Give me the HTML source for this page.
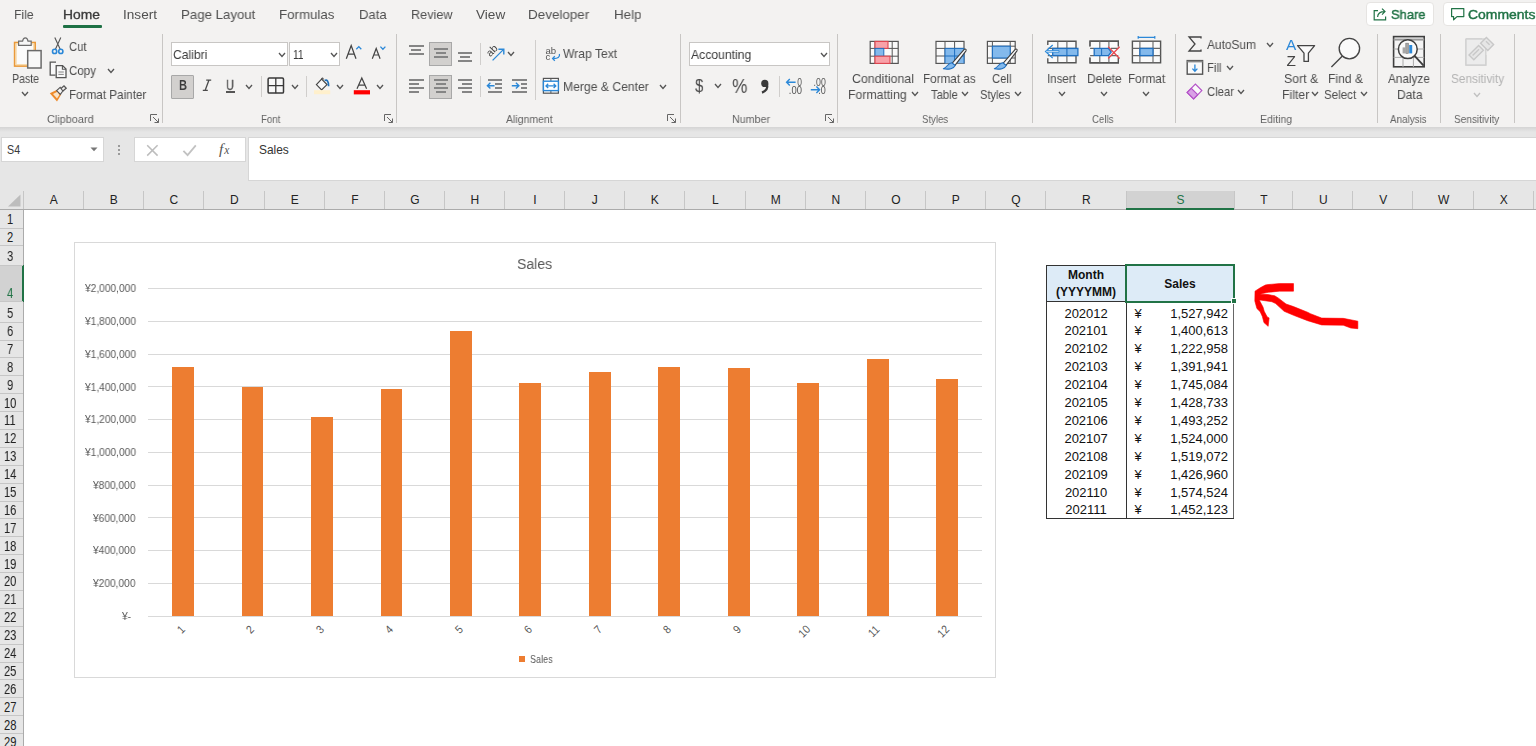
<!DOCTYPE html>
<html><head><meta charset="utf-8"><style>
html,body{margin:0;padding:0;}
body{width:1536px;height:746px;overflow:hidden;position:relative;background:#fff;font-family:"Liberation Sans",sans-serif;}
.t{position:absolute;white-space:nowrap;line-height:1;transform-origin:0 0;}
svg{overflow:visible}
</style></head><body>
<div style="position:absolute;left:0px;top:0px;width:1536px;height:127px;background:#f3f2f1"></div>
<div style="position:absolute;left:0px;top:127px;width:1536px;height:5px;background:linear-gradient(#d4d4d4,#e6e6e6)"></div>
<div style="position:absolute;left:0px;top:132px;width:1536px;height:59px;background:#e6e6e6"></div>
<div class="t" style="left:13.50px;top:8.29px;font-size:13.6px;color:#505050;transform:scaleX(0.8989);will-change:transform;">File</div>
<div class="t" style="left:63.30px;top:8.29px;font-size:13.6px;color:#3b3b3b;transform:scaleX(1.0171);will-change:transform;-webkit-text-stroke:0.35px #3b3b3b;">Home</div>
<div class="t" style="left:123.30px;top:8.29px;font-size:13.6px;color:#505050;transform:scaleX(0.9908);will-change:transform;">Insert</div>
<div class="t" style="left:181.00px;top:8.29px;font-size:13.6px;color:#505050;transform:scaleX(0.9741);will-change:transform;">Page Layout</div>
<div class="t" style="left:279.40px;top:8.29px;font-size:13.6px;color:#505050;transform:scaleX(0.9792);will-change:transform;">Formulas</div>
<div class="t" style="left:358.50px;top:8.29px;font-size:13.6px;color:#505050;transform:scaleX(0.9607);will-change:transform;">Data</div>
<div class="t" style="left:410.60px;top:8.29px;font-size:13.6px;color:#505050;transform:scaleX(0.9306);will-change:transform;">Review</div>
<div class="t" style="left:476.20px;top:8.29px;font-size:13.6px;color:#505050;transform:scaleX(0.9852);will-change:transform;">View</div>
<div class="t" style="left:528.30px;top:8.29px;font-size:13.6px;color:#505050;transform:scaleX(0.9888);will-change:transform;">Developer</div>
<div class="t" style="left:613.50px;top:8.29px;font-size:13.6px;color:#505050;transform:scaleX(0.9796);will-change:transform;">Help</div>
<div style="position:absolute;left:63px;top:25px;width:39px;height:3px;background:#1e7145;border-radius:1px"></div>
<div style="position:absolute;left:1366px;top:2px;width:68px;height:24px;background:#fff;border:1px solid #e6e4e2;border-radius:4px;box-sizing:border-box"></div>
<div style="position:absolute;left:1443px;top:2px;width:100px;height:24px;background:#fff;border:1px solid #e6e4e2;border-radius:4px;box-sizing:border-box"></div>
<div class="t" style="left:1391.00px;top:7.79px;font-size:13.6px;color:#217346;transform:scaleX(0.9478);will-change:transform;-webkit-text-stroke:0.45px #217346;">Share</div>
<div class="t" style="left:1468.00px;top:7.79px;font-size:13.6px;color:#217346;transform:scaleX(1.0266);will-change:transform;-webkit-text-stroke:0.45px #217346;">Comments</div>
<div style="position:absolute;left:162px;top:34px;width:1px;height:89px;background:#c8c6c4"></div>
<div style="position:absolute;left:396px;top:34px;width:1px;height:89px;background:#c8c6c4"></div>
<div style="position:absolute;left:680px;top:34px;width:1px;height:89px;background:#c8c6c4"></div>
<div style="position:absolute;left:837px;top:34px;width:1px;height:89px;background:#c8c6c4"></div>
<div style="position:absolute;left:1032px;top:34px;width:1px;height:89px;background:#c8c6c4"></div>
<div style="position:absolute;left:1175px;top:34px;width:1px;height:89px;background:#c8c6c4"></div>
<div style="position:absolute;left:1377px;top:34px;width:1px;height:89px;background:#c8c6c4"></div>
<div style="position:absolute;left:1440px;top:34px;width:1px;height:89px;background:#c8c6c4"></div>
<div style="position:absolute;left:1514px;top:34px;width:1px;height:89px;background:#c8c6c4"></div>
<div class="t" style="left:46.60px;top:114.02px;font-size:11.2px;color:#646464;transform:scaleX(0.9720);will-change:transform;">Clipboard</div>
<div class="t" style="left:260.80px;top:114.02px;font-size:11.2px;color:#646464;transform:scaleX(0.8701);will-change:transform;">Font</div>
<div class="t" style="left:506.00px;top:114.02px;font-size:11.2px;color:#646464;transform:scaleX(0.9356);will-change:transform;">Alignment</div>
<div class="t" style="left:731.60px;top:114.02px;font-size:11.2px;color:#646464;transform:scaleX(0.9589);will-change:transform;">Number</div>
<div class="t" style="left:921.80px;top:114.02px;font-size:11.2px;color:#646464;transform:scaleX(0.8590);will-change:transform;">Styles</div>
<div class="t" style="left:1092.30px;top:114.02px;font-size:11.2px;color:#646464;transform:scaleX(0.8636);will-change:transform;">Cells</div>
<div class="t" style="left:1259.80px;top:114.02px;font-size:11.2px;color:#646464;transform:scaleX(0.9402);will-change:transform;">Editing</div>
<div class="t" style="left:1390.00px;top:114.02px;font-size:11.2px;color:#646464;transform:scaleX(0.8776);will-change:transform;">Analysis</div>
<div class="t" style="left:1454.00px;top:114.02px;font-size:11.2px;color:#646464;transform:scaleX(0.8985);will-change:transform;">Sensitivity</div>
<div class="t" style="left:11.80px;top:73.06px;font-size:12.8px;color:#4d4d4d;transform:scaleX(0.8279);will-change:transform;">Paste</div>
<div class="t" style="left:69.40px;top:40.56px;font-size:12.8px;color:#4d4d4d;transform:scaleX(0.8836);will-change:transform;">Cut</div>
<div class="t" style="left:69.40px;top:64.96px;font-size:12.8px;color:#4d4d4d;transform:scaleX(0.9036);will-change:transform;">Copy</div>
<div class="t" style="left:69.40px;top:88.76px;font-size:12.8px;color:#4d4d4d;transform:scaleX(0.9143);will-change:transform;">Format Painter</div>
<div class="t" style="left:562.60px;top:48.26px;font-size:12.8px;color:#4d4d4d;transform:scaleX(0.9484);will-change:transform;">Wrap Text</div>
<div class="t" style="left:562.60px;top:80.66px;font-size:12.8px;color:#4d4d4d;transform:scaleX(0.9496);will-change:transform;">Merge &amp; Center</div>
<div class="t" style="left:852.40px;top:72.86px;font-size:12.8px;color:#4d4d4d;transform:scaleX(0.9681);will-change:transform;">Conditional</div>
<div class="t" style="left:848.30px;top:88.86px;font-size:12.8px;color:#4d4d4d;transform:scaleX(0.9595);will-change:transform;">Formatting</div>
<div class="t" style="left:923.00px;top:72.86px;font-size:12.8px;color:#4d4d4d;transform:scaleX(0.9147);will-change:transform;">Format as</div>
<div class="t" style="left:930.50px;top:88.86px;font-size:12.8px;color:#4d4d4d;transform:scaleX(0.8758);will-change:transform;">Table</div>
<div class="t" style="left:991.50px;top:72.86px;font-size:12.8px;color:#4d4d4d;transform:scaleX(0.8843);will-change:transform;">Cell</div>
<div class="t" style="left:980.00px;top:88.86px;font-size:12.8px;color:#4d4d4d;transform:scaleX(0.8693);will-change:transform;">Styles</div>
<div class="t" style="left:1047.40px;top:72.86px;font-size:12.8px;color:#4d4d4d;transform:scaleX(0.8996);will-change:transform;">Insert</div>
<div class="t" style="left:1087.00px;top:72.86px;font-size:12.8px;color:#4d4d4d;transform:scaleX(0.9405);will-change:transform;">Delete</div>
<div class="t" style="left:1127.60px;top:72.86px;font-size:12.8px;color:#4d4d4d;transform:scaleX(0.9152);will-change:transform;">Format</div>
<div class="t" style="left:1207.00px;top:39.06px;font-size:12.8px;color:#4d4d4d;transform:scaleX(0.9306);will-change:transform;">AutoSum</div>
<div class="t" style="left:1207.00px;top:62.26px;font-size:12.8px;color:#4d4d4d;transform:scaleX(0.8868);will-change:transform;">Fill</div>
<div class="t" style="left:1207.00px;top:86.16px;font-size:12.8px;color:#4d4d4d;transform:scaleX(0.8827);will-change:transform;">Clear</div>
<div class="t" style="left:1283.80px;top:72.86px;font-size:12.8px;color:#4d4d4d;transform:scaleX(0.9615);will-change:transform;">Sort &amp;</div>
<div class="t" style="left:1281.70px;top:88.86px;font-size:12.8px;color:#4d4d4d;transform:scaleX(0.9597);will-change:transform;">Filter</div>
<div class="t" style="left:1328.00px;top:72.86px;font-size:12.8px;color:#4d4d4d;transform:scaleX(0.9461);will-change:transform;">Find &amp;</div>
<div class="t" style="left:1323.80px;top:88.86px;font-size:12.8px;color:#4d4d4d;transform:scaleX(0.9051);will-change:transform;">Select</div>
<div class="t" style="left:1388.30px;top:73.26px;font-size:12.8px;color:#4d4d4d;transform:scaleX(0.9179);will-change:transform;">Analyze</div>
<div class="t" style="left:1396.50px;top:88.86px;font-size:12.8px;color:#4d4d4d;transform:scaleX(0.9431);will-change:transform;">Data</div>
<div class="t" style="left:1451.00px;top:73.26px;font-size:12.8px;color:#b3b3b3;transform:scaleX(0.9216);will-change:transform;">Sensitivity</div>
<div style="position:absolute;left:171px;top:42px;width:117px;height:24px;background:#fff;border:1px solid #c8c6c4;box-sizing:border-box"></div>
<div style="position:absolute;left:289px;top:42px;width:51px;height:24px;background:#fff;border:1px solid #c8c6c4;box-sizing:border-box"></div>
<div style="position:absolute;left:689px;top:42px;width:141px;height:24px;background:#fff;border:1px solid #c8c6c4;box-sizing:border-box"></div>
<div class="t" style="left:173.30px;top:47.63px;font-size:13.2px;color:#3a3a3a;transform:scaleX(0.9195);will-change:transform;">Calibri</div>
<div class="t" style="left:293.00px;top:47.63px;font-size:13.2px;color:#3a3a3a;transform:scaleX(0.7735);will-change:transform;">11</div>
<div class="t" style="left:691.40px;top:47.63px;font-size:13.2px;color:#3a3a3a;transform:scaleX(0.9233);will-change:transform;">Accounting</div>
<div style="position:absolute;left:1px;top:137px;width:103px;height:25px;background:#fff;border:1px solid #d6d6d6;box-sizing:border-box"></div>
<div class="t" style="left:6.70px;top:144.16px;font-size:12.8px;color:#3a3a3a;transform:scaleX(0.8367);">S4</div>
<div style="position:absolute;left:134px;top:137px;width:112px;height:25px;background:#fff;border:1px solid #d6d6d6;box-sizing:border-box"></div>
<div style="position:absolute;left:248px;top:137px;width:1300px;height:44px;background:#fff;border:1px solid #d6d6d6;box-sizing:border-box"></div>
<div class="t" style="left:259.40px;top:144.19px;font-size:12.3px;color:#333;transform:scaleX(0.9685);">Sales</div>
<div style="position:absolute;left:0px;top:191px;width:1536px;height:19px;background:#e6e6e6"></div>
<div style="position:absolute;left:0px;top:209px;width:1536px;height:1px;background:#ababab"></div>
<div style="position:absolute;left:1126px;top:191px;width:108px;height:18px;background:#d2d2d2"></div>
<div style="position:absolute;left:23px;top:191px;width:1px;height:18px;background:#c6c6c6"></div>
<div style="position:absolute;left:83px;top:191px;width:1px;height:18px;background:#c6c6c6"></div>
<div style="position:absolute;left:143px;top:191px;width:1px;height:18px;background:#c6c6c6"></div>
<div style="position:absolute;left:203px;top:191px;width:1px;height:18px;background:#c6c6c6"></div>
<div style="position:absolute;left:264px;top:191px;width:1px;height:18px;background:#c6c6c6"></div>
<div style="position:absolute;left:324px;top:191px;width:1px;height:18px;background:#c6c6c6"></div>
<div style="position:absolute;left:384px;top:191px;width:1px;height:18px;background:#c6c6c6"></div>
<div style="position:absolute;left:444px;top:191px;width:1px;height:18px;background:#c6c6c6"></div>
<div style="position:absolute;left:504px;top:191px;width:1px;height:18px;background:#c6c6c6"></div>
<div style="position:absolute;left:564px;top:191px;width:1px;height:18px;background:#c6c6c6"></div>
<div style="position:absolute;left:624px;top:191px;width:1px;height:18px;background:#c6c6c6"></div>
<div style="position:absolute;left:684px;top:191px;width:1px;height:18px;background:#c6c6c6"></div>
<div style="position:absolute;left:745px;top:191px;width:1px;height:18px;background:#c6c6c6"></div>
<div style="position:absolute;left:805px;top:191px;width:1px;height:18px;background:#c6c6c6"></div>
<div style="position:absolute;left:865px;top:191px;width:1px;height:18px;background:#c6c6c6"></div>
<div style="position:absolute;left:925px;top:191px;width:1px;height:18px;background:#c6c6c6"></div>
<div style="position:absolute;left:985px;top:191px;width:1px;height:18px;background:#c6c6c6"></div>
<div style="position:absolute;left:1045px;top:191px;width:1px;height:18px;background:#c6c6c6"></div>
<div style="position:absolute;left:1126px;top:191px;width:1px;height:18px;background:#c6c6c6"></div>
<div style="position:absolute;left:1234px;top:191px;width:1px;height:18px;background:#c6c6c6"></div>
<div style="position:absolute;left:1292px;top:191px;width:1px;height:18px;background:#c6c6c6"></div>
<div style="position:absolute;left:1352px;top:191px;width:1px;height:18px;background:#c6c6c6"></div>
<div style="position:absolute;left:1412px;top:191px;width:1px;height:18px;background:#c6c6c6"></div>
<div style="position:absolute;left:1473px;top:191px;width:1px;height:18px;background:#c6c6c6"></div>
<div style="position:absolute;left:1533px;top:191px;width:1px;height:18px;background:#c6c6c6"></div>
<div style="position:absolute;left:1126px;top:208px;width:108px;height:2px;background:#217346"></div>
<div class="t" style="left:49.80px;top:194.34px;font-size:12px;color:#222;">A</div>
<div class="t" style="left:109.80px;top:194.34px;font-size:12px;color:#222;">B</div>
<div class="t" style="left:169.47px;top:194.34px;font-size:12px;color:#222;">C</div>
<div class="t" style="left:229.97px;top:194.34px;font-size:12px;color:#222;">D</div>
<div class="t" style="left:290.80px;top:194.34px;font-size:12px;color:#222;">E</div>
<div class="t" style="left:351.13px;top:194.34px;font-size:12px;color:#222;">F</div>
<div class="t" style="left:410.13px;top:194.34px;font-size:12px;color:#222;">G</div>
<div class="t" style="left:470.47px;top:194.34px;font-size:12px;color:#222;">H</div>
<div class="t" style="left:533.13px;top:194.34px;font-size:12px;color:#222;">I</div>
<div class="t" style="left:591.80px;top:194.34px;font-size:12px;color:#222;">J</div>
<div class="t" style="left:650.80px;top:194.34px;font-size:12px;color:#222;">K</div>
<div class="t" style="left:711.96px;top:194.34px;font-size:12px;color:#222;">L</div>
<div class="t" style="left:770.80px;top:194.34px;font-size:12px;color:#222;">M</div>
<div class="t" style="left:831.47px;top:194.34px;font-size:12px;color:#222;">N</div>
<div class="t" style="left:891.13px;top:194.34px;font-size:12px;color:#222;">O</div>
<div class="t" style="left:951.80px;top:194.34px;font-size:12px;color:#222;">P</div>
<div class="t" style="left:1011.13px;top:194.34px;font-size:12px;color:#222;">Q</div>
<div class="t" style="left:1081.97px;top:194.34px;font-size:12px;color:#222;">R</div>
<div class="t" style="left:1176.55px;top:194.34px;font-size:12px;color:#217346;">S</div>
<div class="t" style="left:1260.13px;top:194.34px;font-size:12px;color:#222;">T</div>
<div class="t" style="left:1318.97px;top:194.34px;font-size:12px;color:#222;">U</div>
<div class="t" style="left:1379.30px;top:194.34px;font-size:12px;color:#222;">V</div>
<div class="t" style="left:1437.89px;top:194.34px;font-size:12px;color:#222;">W</div>
<div class="t" style="left:1499.80px;top:194.34px;font-size:12px;color:#222;">X</div>
<svg style="position:absolute;left:3px;top:193px" width="20" height="15" viewBox="0 0 20 15"><path d="M17.5 1.5 L17.5 13.5 L5 13.5 Z" fill="#bdbdbd"/></svg>
<div style="position:absolute;left:0px;top:210px;width:23px;height:536px;background:#e6e6e6"></div>
<div style="position:absolute;left:23px;top:210px;width:1px;height:536px;background:#ababab"></div>
<div style="position:absolute;left:0px;top:265px;width:23px;height:36px;background:#d2d2d2"></div>
<div style="position:absolute;left:22px;top:265px;width:2px;height:37px;background:#217346"></div>
<div style="position:absolute;left:0px;top:228px;width:23px;height:1px;background:#c6c6c6"></div>
<div class="t" style="left:6.89px;top:211.85px;font-size:14px;color:#222;transform:scaleX(0.8000);">1</div>
<div style="position:absolute;left:0px;top:245px;width:23px;height:1px;background:#c6c6c6"></div>
<div class="t" style="left:6.89px;top:229.75px;font-size:14px;color:#222;transform:scaleX(0.8000);">2</div>
<div style="position:absolute;left:0px;top:265px;width:23px;height:1px;background:#c6c6c6"></div>
<div class="t" style="left:6.89px;top:249.35px;font-size:14px;color:#222;transform:scaleX(0.8000);will-change:transform;">3</div>
<div style="position:absolute;left:0px;top:301px;width:23px;height:1px;background:#c6c6c6"></div>
<div class="t" style="left:6.89px;top:285.65px;font-size:14px;color:#217346;transform:scaleX(0.8000);will-change:transform;">4</div>
<div style="position:absolute;left:0px;top:322px;width:23px;height:1px;background:#c6c6c6"></div>
<div class="t" style="left:6.89px;top:306.05px;font-size:14px;color:#222;transform:scaleX(0.8000);will-change:transform;">5</div>
<div style="position:absolute;left:0px;top:340px;width:23px;height:1px;background:#c6c6c6"></div>
<div class="t" style="left:6.89px;top:323.94px;font-size:14px;color:#222;transform:scaleX(0.8000);will-change:transform;">6</div>
<div style="position:absolute;left:0px;top:357px;width:23px;height:1px;background:#c6c6c6"></div>
<div class="t" style="left:6.89px;top:341.83px;font-size:14px;color:#222;transform:scaleX(0.8000);will-change:transform;">7</div>
<div style="position:absolute;left:0px;top:375px;width:23px;height:1px;background:#c6c6c6"></div>
<div class="t" style="left:6.89px;top:359.72px;font-size:14px;color:#222;transform:scaleX(0.8000);will-change:transform;">8</div>
<div style="position:absolute;left:0px;top:393px;width:23px;height:1px;background:#c6c6c6"></div>
<div class="t" style="left:6.89px;top:377.61px;font-size:14px;color:#222;transform:scaleX(0.8000);will-change:transform;">9</div>
<div style="position:absolute;left:0px;top:411px;width:23px;height:1px;background:#c6c6c6"></div>
<div class="t" style="left:3.77px;top:395.50px;font-size:14px;color:#222;transform:scaleX(0.8000);will-change:transform;">10</div>
<div style="position:absolute;left:0px;top:429px;width:23px;height:1px;background:#c6c6c6"></div>
<div class="t" style="left:4.19px;top:413.39px;font-size:14px;color:#222;transform:scaleX(0.8000);will-change:transform;">11</div>
<div style="position:absolute;left:0px;top:447px;width:23px;height:1px;background:#c6c6c6"></div>
<div class="t" style="left:3.77px;top:431.28px;font-size:14px;color:#222;transform:scaleX(0.8000);will-change:transform;">12</div>
<div style="position:absolute;left:0px;top:465px;width:23px;height:1px;background:#c6c6c6"></div>
<div class="t" style="left:3.77px;top:449.17px;font-size:14px;color:#222;transform:scaleX(0.8000);will-change:transform;">13</div>
<div style="position:absolute;left:0px;top:483px;width:23px;height:1px;background:#c6c6c6"></div>
<div class="t" style="left:3.77px;top:467.06px;font-size:14px;color:#222;transform:scaleX(0.8000);will-change:transform;">14</div>
<div style="position:absolute;left:0px;top:501px;width:23px;height:1px;background:#c6c6c6"></div>
<div class="t" style="left:3.77px;top:484.95px;font-size:14px;color:#222;transform:scaleX(0.8000);will-change:transform;">15</div>
<div style="position:absolute;left:0px;top:518px;width:23px;height:1px;background:#c6c6c6"></div>
<div class="t" style="left:3.77px;top:502.84px;font-size:14px;color:#222;transform:scaleX(0.8000);will-change:transform;">16</div>
<div style="position:absolute;left:0px;top:536px;width:23px;height:1px;background:#c6c6c6"></div>
<div class="t" style="left:3.77px;top:520.73px;font-size:14px;color:#222;transform:scaleX(0.8000);will-change:transform;">17</div>
<div style="position:absolute;left:0px;top:554px;width:23px;height:1px;background:#c6c6c6"></div>
<div class="t" style="left:3.77px;top:538.62px;font-size:14px;color:#222;transform:scaleX(0.8000);will-change:transform;">18</div>
<div style="position:absolute;left:0px;top:572px;width:23px;height:1px;background:#c6c6c6"></div>
<div class="t" style="left:3.77px;top:556.51px;font-size:14px;color:#222;transform:scaleX(0.8000);will-change:transform;">19</div>
<div style="position:absolute;left:0px;top:590px;width:23px;height:1px;background:#c6c6c6"></div>
<div class="t" style="left:3.77px;top:574.40px;font-size:14px;color:#222;transform:scaleX(0.8000);will-change:transform;">20</div>
<div style="position:absolute;left:0px;top:608px;width:23px;height:1px;background:#c6c6c6"></div>
<div class="t" style="left:3.77px;top:592.29px;font-size:14px;color:#222;transform:scaleX(0.8000);will-change:transform;">21</div>
<div style="position:absolute;left:0px;top:626px;width:23px;height:1px;background:#c6c6c6"></div>
<div class="t" style="left:3.77px;top:610.18px;font-size:14px;color:#222;transform:scaleX(0.8000);will-change:transform;">22</div>
<div style="position:absolute;left:0px;top:644px;width:23px;height:1px;background:#c6c6c6"></div>
<div class="t" style="left:3.77px;top:628.07px;font-size:14px;color:#222;transform:scaleX(0.8000);will-change:transform;">23</div>
<div style="position:absolute;left:0px;top:662px;width:23px;height:1px;background:#c6c6c6"></div>
<div class="t" style="left:3.77px;top:645.96px;font-size:14px;color:#222;transform:scaleX(0.8000);will-change:transform;">24</div>
<div style="position:absolute;left:0px;top:679px;width:23px;height:1px;background:#c6c6c6"></div>
<div class="t" style="left:3.77px;top:663.85px;font-size:14px;color:#222;transform:scaleX(0.8000);will-change:transform;">25</div>
<div style="position:absolute;left:0px;top:697px;width:23px;height:1px;background:#c6c6c6"></div>
<div class="t" style="left:3.77px;top:681.74px;font-size:14px;color:#222;transform:scaleX(0.8000);will-change:transform;">26</div>
<div style="position:absolute;left:0px;top:715px;width:23px;height:1px;background:#c6c6c6"></div>
<div class="t" style="left:3.77px;top:699.63px;font-size:14px;color:#222;transform:scaleX(0.8000);">27</div>
<div style="position:absolute;left:0px;top:733px;width:23px;height:1px;background:#c6c6c6"></div>
<div class="t" style="left:3.77px;top:717.52px;font-size:14px;color:#222;transform:scaleX(0.8000);">28</div>
<div style="position:absolute;left:0px;top:751px;width:23px;height:1px;background:#c6c6c6"></div>
<div class="t" style="left:3.77px;top:735.41px;font-size:14px;color:#222;transform:scaleX(0.8000);">29</div>
<div style="position:absolute;left:0px;top:769px;width:23px;height:1px;background:#c6c6c6"></div>
<div class="t" style="left:3.77px;top:753.30px;font-size:14px;color:#222;transform:scaleX(0.8000);">30</div>
<div style="position:absolute;left:24px;top:210px;width:1512px;height:536px;background:#fff"></div>
<div style="position:absolute;left:74px;top:242px;width:922px;height:436px;background:#fff;border:1px solid #d9d9d9;box-sizing:border-box"></div>
<div class="t" style="left:516.90px;top:255.66px;font-size:15.4px;color:#595959;transform:scaleX(0.9137);will-change:transform;">Sales</div>
<div style="position:absolute;left:148px;top:616px;width:834px;height:1px;background:#d9d9d9"></div>
<div style="position:absolute;left:148px;top:583px;width:834px;height:1px;background:#d9d9d9"></div>
<div style="position:absolute;left:148px;top:550px;width:834px;height:1px;background:#d9d9d9"></div>
<div style="position:absolute;left:148px;top:517px;width:834px;height:1px;background:#d9d9d9"></div>
<div style="position:absolute;left:148px;top:485px;width:834px;height:1px;background:#d9d9d9"></div>
<div style="position:absolute;left:148px;top:452px;width:834px;height:1px;background:#d9d9d9"></div>
<div style="position:absolute;left:148px;top:419px;width:834px;height:1px;background:#d9d9d9"></div>
<div style="position:absolute;left:148px;top:386px;width:834px;height:1px;background:#d9d9d9"></div>
<div style="position:absolute;left:148px;top:354px;width:834px;height:1px;background:#d9d9d9"></div>
<div style="position:absolute;left:148px;top:321px;width:834px;height:1px;background:#d9d9d9"></div>
<div style="position:absolute;left:148px;top:288px;width:834px;height:1px;background:#d9d9d9"></div>
<div class="t" style="left:122.44px;top:611.01px;font-size:10.5px;color:#595959;transform:scaleX(0.9705);will-change:transform;">¥-</div>
<div class="t" style="left:93.00px;top:578.24px;font-size:10.5px;color:#595959;transform:scaleX(0.9705);will-change:transform;">¥200,000</div>
<div class="t" style="left:93.00px;top:545.47px;font-size:10.5px;color:#595959;transform:scaleX(0.9705);will-change:transform;">¥400,000</div>
<div class="t" style="left:93.00px;top:512.70px;font-size:10.5px;color:#595959;transform:scaleX(0.9705);will-change:transform;">¥600,000</div>
<div class="t" style="left:93.00px;top:479.93px;font-size:10.5px;color:#595959;transform:scaleX(0.9705);will-change:transform;">¥800,000</div>
<div class="t" style="left:84.50px;top:447.16px;font-size:10.5px;color:#595959;transform:scaleX(0.9705);will-change:transform;">¥1,000,000</div>
<div class="t" style="left:84.50px;top:414.39px;font-size:10.5px;color:#595959;transform:scaleX(0.9705);will-change:transform;">¥1,200,000</div>
<div class="t" style="left:84.50px;top:381.62px;font-size:10.5px;color:#595959;transform:scaleX(0.9705);will-change:transform;">¥1,400,000</div>
<div class="t" style="left:84.50px;top:348.85px;font-size:10.5px;color:#595959;transform:scaleX(0.9705);will-change:transform;">¥1,600,000</div>
<div class="t" style="left:84.50px;top:316.08px;font-size:10.5px;color:#595959;transform:scaleX(0.9705);will-change:transform;">¥1,800,000</div>
<div class="t" style="left:84.50px;top:283.31px;font-size:10.5px;color:#595959;transform:scaleX(0.9705);will-change:transform;">¥2,000,000</div>
<div style="position:absolute;left:172.09px;top:366.57px;width:21.7px;height:249.43px;background:#ed7d31"></div>
<div class="t" style="left:176.94px;top:622.05px;font-size:11.5px;color:#595959;transform-origin:100% 50%;transform:rotate(-45deg) scaleX(0.9)">1</div>
<div style="position:absolute;left:241.56px;top:387.44px;width:21.7px;height:228.56px;background:#ed7d31"></div>
<div class="t" style="left:246.42px;top:622.05px;font-size:11.5px;color:#595959;transform-origin:100% 50%;transform:rotate(-45deg) scaleX(0.9)">2</div>
<div style="position:absolute;left:311.04px;top:416.56px;width:21.7px;height:199.44px;background:#ed7d31"></div>
<div class="t" style="left:315.89px;top:622.05px;font-size:11.5px;color:#595959;transform-origin:100% 50%;transform:rotate(-45deg) scaleX(0.9)">3</div>
<div style="position:absolute;left:380.51px;top:388.86px;width:21.7px;height:227.14px;background:#ed7d31"></div>
<div class="t" style="left:385.37px;top:622.05px;font-size:11.5px;color:#595959;transform-origin:100% 50%;transform:rotate(-45deg) scaleX(0.9)">4</div>
<div style="position:absolute;left:449.99px;top:330.98px;width:21.7px;height:285.02px;background:#ed7d31"></div>
<div class="t" style="left:454.84px;top:622.05px;font-size:11.5px;color:#595959;transform-origin:100% 50%;transform:rotate(-45deg) scaleX(0.9)">5</div>
<div style="position:absolute;left:519.46px;top:382.83px;width:21.7px;height:233.17px;background:#ed7d31"></div>
<div class="t" style="left:524.32px;top:622.05px;font-size:11.5px;color:#595959;transform-origin:100% 50%;transform:rotate(-45deg) scaleX(0.9)">6</div>
<div style="position:absolute;left:588.94px;top:372.26px;width:21.7px;height:243.74px;background:#ed7d31"></div>
<div class="t" style="left:593.79px;top:622.05px;font-size:11.5px;color:#595959;transform-origin:100% 50%;transform:rotate(-45deg) scaleX(0.9)">7</div>
<div style="position:absolute;left:658.41px;top:367.22px;width:21.7px;height:248.78px;background:#ed7d31"></div>
<div class="t" style="left:663.27px;top:622.05px;font-size:11.5px;color:#595959;transform-origin:100% 50%;transform:rotate(-45deg) scaleX(0.9)">8</div>
<div style="position:absolute;left:727.89px;top:368.02px;width:21.7px;height:247.98px;background:#ed7d31"></div>
<div class="t" style="left:732.74px;top:622.05px;font-size:11.5px;color:#595959;transform-origin:100% 50%;transform:rotate(-45deg) scaleX(0.9)">9</div>
<div style="position:absolute;left:797.36px;top:383.12px;width:21.7px;height:232.88px;background:#ed7d31"></div>
<div class="t" style="left:795.82px;top:622.05px;font-size:11.5px;color:#595959;transform-origin:100% 50%;transform:rotate(-45deg) scaleX(0.9)">10</div>
<div style="position:absolute;left:866.84px;top:358.94px;width:21.7px;height:257.06px;background:#ed7d31"></div>
<div class="t" style="left:866.15px;top:622.05px;font-size:11.5px;color:#595959;transform-origin:100% 50%;transform:rotate(-45deg) scaleX(0.9)">11</div>
<div style="position:absolute;left:936.31px;top:379.00px;width:21.7px;height:237.00px;background:#ed7d31"></div>
<div class="t" style="left:934.77px;top:622.05px;font-size:11.5px;color:#595959;transform-origin:100% 50%;transform:rotate(-45deg) scaleX(0.9)">12</div>
<div style="position:absolute;left:519px;top:656px;width:6px;height:6px;background:#ed7d31"></div>
<div class="t" style="left:529.90px;top:653.83px;font-size:10.6px;color:#595959;transform:scaleX(0.8561);will-change:transform;">Sales</div>
<div style="position:absolute;left:1046px;top:265px;width:80px;height:36px;background:#ddebf7"></div>
<div style="position:absolute;left:1126px;top:265px;width:108px;height:36px;background:#ddebf7"></div>
<div style="position:absolute;left:1046px;top:265px;width:1px;height:254px;background:#333"></div>
<div style="position:absolute;left:1126px;top:265px;width:1px;height:254px;background:#333"></div>
<div style="position:absolute;left:1233px;top:265px;width:1px;height:254px;background:#666"></div>
<div style="position:absolute;left:1046px;top:265px;width:188px;height:1px;background:#333"></div>
<div style="position:absolute;left:1046px;top:301px;width:188px;height:1px;background:#333"></div>
<div style="position:absolute;left:1046px;top:518px;width:188px;height:1px;background:#333"></div>
<div class="t" style="left:1068.01px;top:269.34px;font-size:12px;color:#111;font-weight:bold;">Month</div>
<div class="t" style="left:1056.00px;top:286.34px;font-size:12px;color:#111;font-weight:bold;">(YYYYMM)</div>
<div class="t" style="left:1164.32px;top:277.84px;font-size:12px;color:#111;font-weight:bold;">Sales</div>
<div class="t" style="left:1064.41px;top:306.60px;font-size:13px;color:#111;">202012</div>
<div class="t" style="left:1134.50px;top:306.60px;font-size:13px;color:#111;">¥</div>
<div class="t" style="left:1170.17px;top:306.60px;font-size:13px;color:#111;">1,527,942</div>
<div class="t" style="left:1064.41px;top:324.49px;font-size:13px;color:#111;">202101</div>
<div class="t" style="left:1134.50px;top:324.49px;font-size:13px;color:#111;">¥</div>
<div class="t" style="left:1170.17px;top:324.49px;font-size:13px;color:#111;">1,400,613</div>
<div class="t" style="left:1064.41px;top:342.38px;font-size:13px;color:#111;">202102</div>
<div class="t" style="left:1134.50px;top:342.38px;font-size:13px;color:#111;">¥</div>
<div class="t" style="left:1170.17px;top:342.38px;font-size:13px;color:#111;">1,222,958</div>
<div class="t" style="left:1064.41px;top:360.27px;font-size:13px;color:#111;">202103</div>
<div class="t" style="left:1134.50px;top:360.27px;font-size:13px;color:#111;">¥</div>
<div class="t" style="left:1170.17px;top:360.27px;font-size:13px;color:#111;">1,391,941</div>
<div class="t" style="left:1064.41px;top:378.16px;font-size:13px;color:#111;">202104</div>
<div class="t" style="left:1134.50px;top:378.16px;font-size:13px;color:#111;">¥</div>
<div class="t" style="left:1170.17px;top:378.16px;font-size:13px;color:#111;">1,745,084</div>
<div class="t" style="left:1064.41px;top:396.05px;font-size:13px;color:#111;">202105</div>
<div class="t" style="left:1134.50px;top:396.05px;font-size:13px;color:#111;">¥</div>
<div class="t" style="left:1170.17px;top:396.05px;font-size:13px;color:#111;">1,428,733</div>
<div class="t" style="left:1064.41px;top:413.94px;font-size:13px;color:#111;">202106</div>
<div class="t" style="left:1134.50px;top:413.94px;font-size:13px;color:#111;">¥</div>
<div class="t" style="left:1170.17px;top:413.94px;font-size:13px;color:#111;">1,493,252</div>
<div class="t" style="left:1064.41px;top:431.83px;font-size:13px;color:#111;">202107</div>
<div class="t" style="left:1134.50px;top:431.83px;font-size:13px;color:#111;">¥</div>
<div class="t" style="left:1170.17px;top:431.83px;font-size:13px;color:#111;">1,524,000</div>
<div class="t" style="left:1064.41px;top:449.72px;font-size:13px;color:#111;">202108</div>
<div class="t" style="left:1134.50px;top:449.72px;font-size:13px;color:#111;">¥</div>
<div class="t" style="left:1170.17px;top:449.72px;font-size:13px;color:#111;">1,519,072</div>
<div class="t" style="left:1064.41px;top:467.61px;font-size:13px;color:#111;">202109</div>
<div class="t" style="left:1134.50px;top:467.61px;font-size:13px;color:#111;">¥</div>
<div class="t" style="left:1170.17px;top:467.61px;font-size:13px;color:#111;">1,426,960</div>
<div class="t" style="left:1064.89px;top:485.50px;font-size:13px;color:#111;">202110</div>
<div class="t" style="left:1134.50px;top:485.50px;font-size:13px;color:#111;">¥</div>
<div class="t" style="left:1170.17px;top:485.50px;font-size:13px;color:#111;">1,574,524</div>
<div class="t" style="left:1065.37px;top:503.39px;font-size:13px;color:#111;">202111</div>
<div class="t" style="left:1134.50px;top:503.39px;font-size:13px;color:#111;">¥</div>
<div class="t" style="left:1170.17px;top:503.39px;font-size:13px;color:#111;">1,452,123</div>
<div style="position:absolute;left:1125px;top:264px;width:110px;height:39px;border:2px solid #217346;box-sizing:border-box"></div>
<div style="position:absolute;left:1231px;top:298px;width:6px;height:6px;background:#217346;border:1px solid #fff;box-sizing:border-box"></div>
<svg style="position:absolute;left:1240px;top:270px" width="130" height="70" viewBox="0 0 130 70"><path d="M53.52 13.62 L39.44 13.62 L28.17 14.55 L25.35 15.02 L20.19 17.84 L15.02 21.13 L14.84 30.99 L16.90 38.50 L20.19 41.78 L22.35 46.48 L23.94 52.58 L28.17 56.34 L29.11 47.89 L27.23 46.95 L24.23 41.31 L23.00 37.09 L19.25 30.05 L21.60 30.23 L31.92 31.74 L35.68 33.62 L44.13 41.31 L53.52 45.26 L67.61 50.70 L81.69 54.93 L103.29 55.21 L110.80 58.03 L117.84 58.69 L117.84 51.17 L103.29 48.36 L81.69 48.08 L70.42 43.66 L67.61 42.25 L53.52 36.62 L46.01 33.99 L38.50 28.17 L34.74 25.82 L28.17 24.60 L20.19 24.23 L22.54 23.47 L28.17 22.35 L39.44 21.13 L53.52 21.13 Z" fill="#ff0000" stroke="#ff0000" stroke-width="0.6" stroke-linejoin="round"/></svg>
<svg style="position:absolute;left:13px;top:37px" width="30" height="33" viewBox="0 0 30 33"><rect x="1.6" y="5.5" width="20.6" height="23.6" fill="#faf3e3" stroke="#ea9a3a" stroke-width="1.6"/><rect x="3.2" y="7" width="17.4" height="20.6" fill="#fbfbfb" stroke="#f7d9a8" stroke-width="1"/><path d="M5.6 8.4 V4.2 H9.6 C10 1.4 11.4 0.8 12.3 0.8 C13.2 0.8 14.6 1.4 15 4.2 H18.2 V8.4 Z" fill="#f7f7f7" stroke="#6e6e6e" stroke-width="1.2"/><rect x="14.7" y="13.6" width="13.4" height="17.4" fill="#f8f8f8" stroke="#6a6a6a" stroke-width="1.5"/></svg>
<svg style="position:absolute;left:20.80px;top:91.10px" width="8" height="5.4"><path d="M1 1 L4.0 4.4 L7 1" fill="none" stroke="#555" stroke-width="1.35"/></svg>
<svg style="position:absolute;left:50px;top:36px" width="16" height="19" viewBox="0 0 16 19"><path d="M4.8 1.5 L10.3 13.5 M10.8 1.5 L5.3 13.5" stroke="#555" stroke-width="1.1" fill="none"/><circle cx="4.6" cy="15.4" r="2.1" fill="none" stroke="#2b88d8" stroke-width="1.6"/><circle cx="10.8" cy="15.4" r="2.1" fill="none" stroke="#2b88d8" stroke-width="1.6"/></svg>
<svg style="position:absolute;left:48px;top:61px" width="20" height="18" viewBox="0 0 20 18"><path d="M8 1.2 H2.2 V14.2 H7.5" fill="#f8f8f8" stroke="#555" stroke-width="1.3"/><path d="M8.2 4.6 H14.6 L18 8 V16.6 H8.2 Z" fill="#f8f8f8" stroke="#555" stroke-width="1.3"/><path d="M14.4 4.6 V8.2 H18" fill="none" stroke="#555" stroke-width="1.1"/><path d="M10.4 11 H15.8 M10.4 13.4 H15.8" stroke="#777" stroke-width="0.9"/></svg>
<svg style="position:absolute;left:107.00px;top:67.90px" width="8" height="5.4"><path d="M1 1 L4.0 4.4 L7 1" fill="none" stroke="#555" stroke-width="1.35"/></svg>
<svg style="position:absolute;left:48px;top:85px" width="20" height="18" viewBox="0 0 20 18"><path d="M1.8 8.2 L9.6 4.4 L13.2 9.6 L9 16.4 Z" fill="#ee8a2a"/><path d="M5 9 L9.4 6.8 L11.4 9.8 L9 13.6 Z" fill="#fbe3c6"/><path d="M8.6 5.6 L12.2 2.4 L14.8 6 L12.4 9.4 Z" fill="#f4f4f4" stroke="#555" stroke-width="1.1"/><path d="M13 3.6 L16 0.8 L18.2 3.2 L14.6 6.2" fill="none" stroke="#555" stroke-width="1.3"/></svg>
<svg style="position:absolute;left:150px;top:114px" width="10" height="10" viewBox="0 0 10 10"><path d="M0.5 7 V0.5 H7" fill="none" stroke="#666" stroke-width="1"/><path d="M3 3 L8.5 8.5 M8.5 4.5 V8.5 H4.5" fill="none" stroke="#666" stroke-width="1"/></svg>
<svg style="position:absolute;left:277.80px;top:51.90px" width="8" height="5.4"><path d="M1 1 L4.0 4.4 L7 1" fill="none" stroke="#555" stroke-width="1.35"/></svg>
<svg style="position:absolute;left:329.80px;top:51.90px" width="8" height="5.4"><path d="M1 1 L4.0 4.4 L7 1" fill="none" stroke="#555" stroke-width="1.35"/></svg>
<svg style="position:absolute;left:345px;top:44px" width="18" height="16" viewBox="0 0 18 16"><path d="M1.3 14.8 L6.2 1.5 L11 14.8 M3.2 10 H9.2" fill="none" stroke="#444" stroke-width="1.25"/><path d="M11.3 5.2 L13.8 2.6 L16.3 5.2" fill="none" stroke="#2b88d8" stroke-width="1.3"/></svg>
<svg style="position:absolute;left:371px;top:45px" width="16" height="15" viewBox="0 0 16 15"><path d="M1.3 13.8 L5.2 3.5 L9.1 13.8 M2.8 10 H7.6" fill="none" stroke="#444" stroke-width="1.2"/><path d="M9.4 1.6 L11.9 4.2 L14.4 1.6" fill="none" stroke="#2b88d8" stroke-width="1.3"/></svg>
<div style="position:absolute;left:171px;top:75px;width:23px;height:24px;background:#d2d0ce;border:1px solid #a8a8a8;box-sizing:border-box;border-radius:1px"></div>
<div class="t" style="left:178.60px;top:78.18px;font-size:14.2px;color:#3a3a3a;font-weight:bold;transform:scaleX(0.7801);will-change:transform;">B</div>
<svg style="position:absolute;left:200px;top:77px" width="14" height="16" viewBox="0 0 14 16"><path d="M6.2 3.2 H11.2 M7.8 13.4 H2.8 M8.9 3.2 L5.1 13.4" fill="none" stroke="#4a4a4a" stroke-width="1.3"/></svg>
<div class="t" style="left:226.40px;top:78.28px;font-size:14.2px;color:#505050;transform:scaleX(0.7801);will-change:transform;-webkit-text-stroke:0.3px #505050;">U</div>
<div style="position:absolute;left:225.8px;top:91.2px;width:9.2px;height:1.5px;background:#555"></div>
<svg style="position:absolute;left:245.00px;top:83.90px" width="8" height="5.4"><path d="M1 1 L4.0 4.4 L7 1" fill="none" stroke="#555" stroke-width="1.35"/></svg>
<div style="position:absolute;left:261px;top:76px;width:1px;height:21px;background:#d0cecc"></div>
<svg style="position:absolute;left:267px;top:77px" width="18" height="18" viewBox="0 0 18 18"><rect x="1.1" y="1.1" width="15.4" height="15" rx="1.2" fill="#f8f8f8" stroke="#383838" stroke-width="1.5"/><path d="M8.8 1 V16.2 M1 8.6 H16.6" stroke="#383838" stroke-width="1.3"/></svg>
<svg style="position:absolute;left:290.80px;top:83.90px" width="8" height="5.4"><path d="M1 1 L4.0 4.4 L7 1" fill="none" stroke="#555" stroke-width="1.35"/></svg>
<div style="position:absolute;left:306px;top:76px;width:1px;height:21px;background:#d0cecc"></div>
<svg style="position:absolute;left:314px;top:77px" width="17" height="18" viewBox="0 0 17 18"><path d="M2.4 7.6 L7.6 2.2 L13 7.6 L7.6 13 Z" fill="#f8f8f8" stroke="#454545" stroke-width="1.2"/><path d="M7.6 2.2 C8 0.6 9 0.6 9.3 2.6" fill="none" stroke="#454545" stroke-width="1.1"/><path d="M10.6 3.6 C13 2.4 14.6 4 14.6 9.2" fill="none" stroke="#1f6fb8" stroke-width="1.7"/><rect x="0" y="13.2" width="16.2" height="4" fill="#fff0cc"/></svg>
<svg style="position:absolute;left:336.20px;top:83.90px" width="8" height="5.4"><path d="M1 1 L4.0 4.4 L7 1" fill="none" stroke="#555" stroke-width="1.35"/></svg>
<svg style="position:absolute;left:353px;top:77px" width="18" height="18" viewBox="0 0 18 18"><path d="M4 11.8 L8.8 1.1 L13.6 11.8 M5.6 8 H12" fill="none" stroke="#444" stroke-width="1.25"/><rect x="0.8" y="13.2" width="16.2" height="4.2" fill="#ff0000"/></svg>
<svg style="position:absolute;left:376.00px;top:83.90px" width="8" height="5.4"><path d="M1 1 L4.0 4.4 L7 1" fill="none" stroke="#555" stroke-width="1.35"/></svg>
<svg style="position:absolute;left:384px;top:114px" width="10" height="10" viewBox="0 0 10 10"><path d="M0.5 7 V0.5 H7" fill="none" stroke="#666" stroke-width="1"/><path d="M3 3 L8.5 8.5 M8.5 4.5 V8.5 H4.5" fill="none" stroke="#666" stroke-width="1"/></svg>
<div style="position:absolute;left:409px;top:45px;width:15px;height:2px;background:#858585"></div>
<div style="position:absolute;left:411px;top:49px;width:10px;height:2px;background:#858585"></div>
<div style="position:absolute;left:409px;top:53px;width:15px;height:2px;background:#858585"></div>
<div style="position:absolute;left:429px;top:42px;width:23px;height:24px;background:#d2d0ce;border:1px solid #a8a8a8;box-sizing:border-box"></div>
<div style="position:absolute;left:434px;top:48px;width:14px;height:2px;background:#858585"></div>
<div style="position:absolute;left:436px;top:52px;width:10px;height:2px;background:#858585"></div>
<div style="position:absolute;left:434px;top:56px;width:14px;height:2px;background:#858585"></div>
<div style="position:absolute;left:458px;top:52px;width:14px;height:2px;background:#858585"></div>
<div style="position:absolute;left:460px;top:56px;width:10px;height:2px;background:#858585"></div>
<div style="position:absolute;left:458px;top:60px;width:14px;height:2px;background:#858585"></div>
<div style="position:absolute;left:480px;top:43px;width:1px;height:22px;background:#d0cecc"></div>
<svg style="position:absolute;left:485px;top:43px" width="22" height="20" viewBox="0 0 22 20"><text x="0" y="0" font-size="10.5" font-family="Liberation Sans" fill="#444" transform="translate(5.2 14.2) rotate(-45)">ab</text><path d="M7.6 17.4 L18.6 6.4" stroke="#2b88d8" stroke-width="1.3"/><path d="M13.4 6.2 H18.8 V11.6" fill="none" stroke="#2b88d8" stroke-width="1.4"/></svg>
<svg style="position:absolute;left:507.00px;top:51.20px" width="8" height="5.4"><path d="M1 1 L4.0 4.4 L7 1" fill="none" stroke="#555" stroke-width="1.35"/></svg>
<div style="position:absolute;left:409px;top:79px;width:15px;height:2px;background:#858585"></div>
<div style="position:absolute;left:409px;top:83px;width:10px;height:2px;background:#858585"></div>
<div style="position:absolute;left:409px;top:87px;width:15px;height:2px;background:#858585"></div>
<div style="position:absolute;left:409px;top:91px;width:10px;height:2px;background:#858585"></div>
<div style="position:absolute;left:429px;top:75px;width:23px;height:24px;background:#d2d0ce;border:1px solid #a8a8a8;box-sizing:border-box"></div>
<div style="position:absolute;left:434px;top:79px;width:14px;height:2px;background:#858585"></div>
<div style="position:absolute;left:436px;top:83px;width:10px;height:2px;background:#858585"></div>
<div style="position:absolute;left:434px;top:87px;width:14px;height:2px;background:#858585"></div>
<div style="position:absolute;left:436px;top:91px;width:10px;height:2px;background:#858585"></div>
<div style="position:absolute;left:458px;top:79px;width:14px;height:2px;background:#858585"></div>
<div style="position:absolute;left:462px;top:83px;width:10px;height:2px;background:#858585"></div>
<div style="position:absolute;left:458px;top:87px;width:14px;height:2px;background:#858585"></div>
<div style="position:absolute;left:462px;top:91px;width:10px;height:2px;background:#858585"></div>
<div style="position:absolute;left:480px;top:76px;width:1px;height:21px;background:#d0cecc"></div>
<div style="position:absolute;left:488px;top:79px;width:14px;height:2px;background:#858585"></div>
<div style="position:absolute;left:495px;top:83px;width:7px;height:2px;background:#858585"></div>
<div style="position:absolute;left:495px;top:87px;width:7px;height:2px;background:#858585"></div>
<div style="position:absolute;left:488px;top:91px;width:14px;height:2px;background:#858585"></div>
<svg style="position:absolute;left:486px;top:82px" width="10" height="8" viewBox="0 0 10 8"><path d="M1.5 3.7 H8.5 M4.4 0.8 L1.4 3.7 L4.4 6.6" fill="none" stroke="#2b88d8" stroke-width="1.4"/></svg>
<div style="position:absolute;left:512px;top:79px;width:15px;height:2px;background:#858585"></div>
<div style="position:absolute;left:521px;top:83px;width:6px;height:2px;background:#858585"></div>
<div style="position:absolute;left:521px;top:87px;width:6px;height:2px;background:#858585"></div>
<div style="position:absolute;left:512px;top:91px;width:15px;height:2px;background:#858585"></div>
<svg style="position:absolute;left:511px;top:82px" width="10" height="8" viewBox="0 0 10 8"><path d="M0.8 3.7 H7.8 M4.9 0.8 L7.9 3.7 L4.9 6.6" fill="none" stroke="#2b88d8" stroke-width="1.4"/></svg>
<div style="position:absolute;left:535px;top:40px;width:1px;height:60px;background:#d0cecc"></div>
<svg style="position:absolute;left:544px;top:44px" width="18" height="18" viewBox="0 0 18 18"><text x="1.4" y="10.2" font-size="9.6" font-family="Liberation Sans" fill="#555">ab</text><text x="1.4" y="16.4" font-size="9.6" font-family="Liberation Sans" fill="#555">c</text><path d="M15.4 10 C16.2 13.2 13.6 14.8 9.2 14.6" fill="none" stroke="#2b88d8" stroke-width="1.3"/><path d="M10.8 12.2 L8.6 14.6 L10.8 16.8" fill="none" stroke="#2b88d8" stroke-width="1.3"/></svg>
<svg style="position:absolute;left:542px;top:77px" width="18" height="18" viewBox="0 0 18 18"><rect x="1.4" y="1.4" width="15" height="14.8" fill="#f8f8f8" stroke="#555" stroke-width="1.2"/><path d="M8.9 1.4 V16.2" stroke="#555" stroke-width="1"/><rect x="1.4" y="4.2" width="15" height="9.4" fill="#fff" stroke="#2b88d8" stroke-width="1.4"/><path d="M4 8.9 H13.8 M6.2 6.8 L4 8.9 L6.2 11 M11.6 6.8 L13.8 8.9 L11.6 11" fill="none" stroke="#2b88d8" stroke-width="1.3"/></svg>
<svg style="position:absolute;left:659.40px;top:84.10px" width="8" height="5.4"><path d="M1 1 L4.0 4.4 L7 1" fill="none" stroke="#555" stroke-width="1.35"/></svg>
<svg style="position:absolute;left:667px;top:114px" width="10" height="10" viewBox="0 0 10 10"><path d="M0.5 7 V0.5 H7" fill="none" stroke="#666" stroke-width="1"/><path d="M3 3 L8.5 8.5 M8.5 4.5 V8.5 H4.5" fill="none" stroke="#666" stroke-width="1"/></svg>
<svg style="position:absolute;left:819.80px;top:51.90px" width="8" height="5.4"><path d="M1 1 L4.0 4.4 L7 1" fill="none" stroke="#555" stroke-width="1.35"/></svg>
<div class="t" style="left:695.40px;top:76.86px;font-size:18.6px;color:#4a4a4a;transform:scaleX(0.8120);will-change:transform;">$</div>
<svg style="position:absolute;left:714.40px;top:83.10px" width="8" height="5.4"><path d="M1 1 L4.0 4.4 L7 1" fill="none" stroke="#555" stroke-width="1.35"/></svg>
<div class="t" style="left:732.30px;top:76.78px;font-size:19.4px;color:#4a4a4a;transform:scaleX(0.8928);will-change:transform;">%</div>
<svg style="position:absolute;left:759px;top:78px" width="12" height="16" viewBox="0 0 12 16"><circle cx="5.8" cy="5.4" r="3.6" fill="#3a3a3a"/><path d="M8 6.4 C9 10.2 7 13 3 14.6" fill="none" stroke="#3a3a3a" stroke-width="2.3"/></svg>
<div style="position:absolute;left:779px;top:76px;width:1px;height:21px;background:#d0cecc"></div>
<svg style="position:absolute;left:780px;top:72px" width="52" height="26" viewBox="0 0 52 26"><path d="M6.6 10.3 H15.6 M9.8 7.1 L6.6 10.3 L9.8 13.5" fill="none" stroke="#2b88d8" stroke-width="1.4"/><text x="17.2" y="13.6" font-size="10" font-family="Liberation Sans" fill="#555" textLength="4.7" lengthAdjust="spacingAndGlyphs">0</text><text x="8.8" y="21.6" font-size="10" font-family="Liberation Sans" fill="#555" textLength="13.1" lengthAdjust="spacingAndGlyphs">.00</text><text x="33.6" y="13.6" font-size="10" font-family="Liberation Sans" fill="#555" textLength="12.2" lengthAdjust="spacingAndGlyphs">.00</text><path d="M30.8 17.8 H39.6 M36.4 14.6 L39.6 17.8 L36.4 21" fill="none" stroke="#2b88d8" stroke-width="1.4"/><text x="38.3" y="21.6" font-size="10" font-family="Liberation Sans" fill="#555" textLength="7.5" lengthAdjust="spacingAndGlyphs">.0</text></svg>
<svg style="position:absolute;left:825px;top:114px" width="10" height="10" viewBox="0 0 10 10"><path d="M0.5 7 V0.5 H7" fill="none" stroke="#666" stroke-width="1"/><path d="M3 3 L8.5 8.5 M8.5 4.5 V8.5 H4.5" fill="none" stroke="#666" stroke-width="1"/></svg>
<svg style="position:absolute;left:860px;top:34px" width="170" height="40" viewBox="0 0 170 40"><rect x="10.2" y="7.4" width="28" height="22" fill="#fafafa" stroke="#555" stroke-width="1.2"/><path d="M10.2 14.4 H38.2 M10.2 22.2 H38.2 M15 7.4 V29.4 M32.2 7.4 V29.4" stroke="#555" stroke-width="1" fill="none"/><rect x="15" y="7.4" width="13" height="7" fill="#f8a1a8" stroke="#e0454f" stroke-width="1.1"/><rect x="15" y="14.4" width="8.8" height="7.8" fill="#83b9ec" stroke="#1f6fc0" stroke-width="1"/><rect x="15" y="22.2" width="15" height="7.2" fill="#f8a1a8" stroke="#e0454f" stroke-width="1.1"/><rect x="76" y="7.4" width="28" height="22" fill="#fafafa" stroke="#555" stroke-width="1.2"/><path d="M76 14.4 H104 M76 22 H104 M85 7.4 V29.4 M94.6 7.4 V29.4" stroke="#555" stroke-width="1" fill="none"/><rect x="85" y="14.4" width="19" height="15" fill="#83b9ec"/><path d="M85 29.4 V14.4 H104 V29.4 M85 22 H104 M94.6 14.4 V29.4" stroke="#1f6fc0" stroke-width="1" fill="none"/><path d="M92.0 29.4 L104.0 15.6 C105.0 14.399999999999999 106.80000000000001 15.399999999999999 106.0 16.8 L94.80000000000001 31.599999999999998 Z" fill="#fafafa" stroke="#404040" stroke-width="1.1" stroke-linejoin="round"/><path d="M91.80000000000001 28.799999999999997 C88.0 29.0 87.60000000000001 32.8 83.4 34.8 C88.80000000000001 35.8 94.0 34.599999999999994 95.2 31.4 Z" fill="#83b9ec" stroke="#1f6fc0" stroke-width="1.1" stroke-linejoin="round"/><rect x="127.4" y="7.4" width="27.8" height="22" fill="#fafafa" stroke="#555" stroke-width="1.2"/><path d="M127.4 12.2 H155.2 M127.4 24 H155.2 M132.4 7.4 V29.4 M150.2 7.4 V29.4" stroke="#555" stroke-width="1" fill="none"/><rect x="132.4" y="12.2" width="17.8" height="11.8" fill="#83b9ec" stroke="#1f6fc0" stroke-width="1.1"/><path d="M143.0 29.4 L155.0 15.6 C156.0 14.399999999999999 157.8 15.399999999999999 157.0 16.8 L145.8 31.599999999999998 Z" fill="#fafafa" stroke="#404040" stroke-width="1.1" stroke-linejoin="round"/><path d="M142.8 28.799999999999997 C139.0 29.0 138.6 32.8 134.4 34.8 C139.8 35.8 145.0 34.599999999999994 146.20000000000002 31.4 Z" fill="#83b9ec" stroke="#1f6fc0" stroke-width="1.1" stroke-linejoin="round"/></svg>
<svg style="position:absolute;left:911.20px;top:91.10px" width="8" height="5.4"><path d="M1 1 L4.0 4.4 L7 1" fill="none" stroke="#555" stroke-width="1.35"/></svg>
<svg style="position:absolute;left:960.80px;top:91.10px" width="8" height="5.4"><path d="M1 1 L4.0 4.4 L7 1" fill="none" stroke="#555" stroke-width="1.35"/></svg>
<svg style="position:absolute;left:1013.60px;top:91.10px" width="8" height="5.4"><path d="M1 1 L4.0 4.4 L7 1" fill="none" stroke="#555" stroke-width="1.35"/></svg>
<svg style="position:absolute;left:1040px;top:34px" width="130" height="34" viewBox="0 0 130 34"><path d="M7.8 11 V7.2 H36 V28.8 H7.8 V24.2" fill="#fafafa" stroke="#555" stroke-width="1.4"/><path d="M7.8 14.4 H36 M7.8 21.6 H36 M17.8 7.2 V28.8 M26.9 7.2 V28.8" stroke="#666" stroke-width="1.1" fill="none"/><rect x="12.7" y="14.4" width="25.2" height="7.2" fill="#83b9ec" stroke="#1f6fc0" stroke-width="1.3"/><path d="M26.9 14.4 V21.6" stroke="#1f6fc0" stroke-width="1.1"/><path d="M12.7 11 L5.6 17.4 L12.7 24.1" fill="none" stroke="#2b88d8" stroke-width="1.3"/><path d="M6.4 16.6 H19 V18.2 H6.4" fill="#fff" stroke="#2b88d8" stroke-width="0.9"/><path d="M50.1 12.6 V7.2 H78.3 V12.6 M50.1 23.4 V28.8 H78.3 V23.4" fill="none" stroke="#555" stroke-width="1.4"/><rect x="50.1" y="7.2" width="28.2" height="21.6" fill="#fafafa" stroke="none"/><path d="M50.1 12.6 V7.2 H78.3 V12.6 M50.1 23.4 V28.8 H78.3 V23.4" fill="none" stroke="#555" stroke-width="1.4"/><path d="M50.1 14.4 H54 M50.1 21.6 H54 M59.8 7.2 V14.4 M59.8 21.6 V28.8 M68.9 7.2 V14.4 M68.9 21.6 V28.8 M71 14.4 H78.3 M71 21.6 H78.3" stroke="#666" stroke-width="1.1" fill="none"/><path d="M54.2 14.4 H68.4 L71.2 18 L68.4 21.6 H54.2 Z" fill="#83b9ec" stroke="#1f6fc0" stroke-width="1.3" stroke-linejoin="round"/><path d="M61.6 14.4 V21.6" stroke="#1f6fc0" stroke-width="1"/><path d="M68.2 12.7 L79.6 24.5 M79.6 12.7 L68.2 24.5" stroke="#e8484f" stroke-width="1.3"/><rect x="92.4" y="7.2" width="28.2" height="21.6" fill="#fafafa" stroke="#555" stroke-width="1.4"/><path d="M92.4 14.4 H120.6 M92.4 21.6 H120.6 M99.9 7.2 V28.8 M113 7.2 V28.8" stroke="#666" stroke-width="1.1" fill="none"/><rect x="99.9" y="14.4" width="13.1" height="7.2" fill="#83b9ec" stroke="#1f6fc0" stroke-width="1.3"/><path d="M98.2 3.4 H114.8 M98.2 2 V4.8 M114.8 2 V4.8" stroke="#2b88d8" stroke-width="1.2"/></svg>
<svg style="position:absolute;left:1057.50px;top:91.10px" width="8" height="5.4"><path d="M1 1 L4.0 4.4 L7 1" fill="none" stroke="#555" stroke-width="1.35"/></svg>
<svg style="position:absolute;left:1099.70px;top:91.10px" width="8" height="5.4"><path d="M1 1 L4.0 4.4 L7 1" fill="none" stroke="#555" stroke-width="1.35"/></svg>
<svg style="position:absolute;left:1142.00px;top:91.10px" width="8" height="5.4"><path d="M1 1 L4.0 4.4 L7 1" fill="none" stroke="#555" stroke-width="1.35"/></svg>
<svg style="position:absolute;left:1187px;top:36px" width="16" height="17" viewBox="0 0 16 17"><path d="M14 2.4 V1 H2 L8 8 L2 15 H14 V13.6" fill="none" stroke="#444" stroke-width="1.3"/></svg>
<svg style="position:absolute;left:1266.00px;top:41.90px" width="8" height="5.4"><path d="M1 1 L4.0 4.4 L7 1" fill="none" stroke="#555" stroke-width="1.35"/></svg>
<svg style="position:absolute;left:1186px;top:59px" width="18" height="17" viewBox="0 0 18 17"><rect x="1.2" y="1.6" width="15.4" height="13.6" fill="#fafafa" stroke="#555" stroke-width="1.4"/><path d="M1.2 2.6 H16.6" stroke="#888" stroke-width="1.6"/><path d="M8.9 5.4 V12.2 M6.4 9.6 L8.9 12.2 L11.4 9.6" fill="none" stroke="#2b88d8" stroke-width="1.3"/></svg>
<svg style="position:absolute;left:1225.50px;top:65.30px" width="8" height="5.4"><path d="M1 1 L4.0 4.4 L7 1" fill="none" stroke="#555" stroke-width="1.35"/></svg>
<svg style="position:absolute;left:1186px;top:82px" width="18" height="18" viewBox="0 0 18 18"><path d="M1.2 10.4 L9.4 2.2 L15.8 8.6 L7.6 16.8 Z" fill="#fafafa" stroke="#b452c8" stroke-width="1.2"/><path d="M1.2 10.4 L5.3 6.3 L11.7 12.7 L7.6 16.8 Z" fill="#d9a2e6" stroke="#b452c8" stroke-width="1.2"/></svg>
<svg style="position:absolute;left:1237.30px;top:88.90px" width="8" height="5.4"><path d="M1 1 L4.0 4.4 L7 1" fill="none" stroke="#555" stroke-width="1.35"/></svg>
<svg style="position:absolute;left:1285px;top:37px" width="32" height="30" viewBox="0 0 32 30"><text x="1" y="13" font-size="15.4" font-family="Liberation Sans" fill="#2b88d8">A</text><text x="1.4" y="28.6" font-size="15.4" font-family="Liberation Sans" fill="#444">Z</text><path d="M12.6 8.6 H29.6 L23.4 16.2 V24.4 H19 V16.2 Z" fill="#fafafa" stroke="#444" stroke-width="1.3" stroke-linejoin="round"/></svg>
<svg style="position:absolute;left:1311.40px;top:91.10px" width="8" height="5.4"><path d="M1 1 L4.0 4.4 L7 1" fill="none" stroke="#555" stroke-width="1.35"/></svg>
<svg style="position:absolute;left:1330px;top:37px" width="24" height="31" viewBox="0 0 24 31"><circle cx="19.4" cy="11.6" r="10.2" fill="#fafafa" stroke="#444" stroke-width="1.35"/><path d="M12.4 19 L1.4 30" stroke="#444" stroke-width="1.35"/></svg>
<svg style="position:absolute;left:1359.80px;top:91.10px" width="8" height="5.4"><path d="M1 1 L4.0 4.4 L7 1" fill="none" stroke="#555" stroke-width="1.35"/></svg>
<svg style="position:absolute;left:1392px;top:35px" width="35" height="34" viewBox="0 0 35 34"><rect x="1.6" y="1.6" width="30.6" height="30.2" fill="#f4f4f4" stroke="#3e3e3e" stroke-width="1.6"/><path d="M1.6 4.6 H32.2" stroke="#9a9a9a" stroke-width="2"/><path d="M1.6 14 H32.2 M1.6 22.4 H32.2 M11 4.6 V32 M21.4 4.6 V32" stroke="#aaa" stroke-width="1"/><circle cx="15.8" cy="14.2" r="9.4" fill="#fafafa" stroke="#3e3e3e" stroke-width="1.5"/><path d="M22.6 20.8 L31.6 30.6" stroke="#3e3e3e" stroke-width="1.8"/><rect x="10.6" y="12.4" width="2.6" height="6" fill="#a6a6a6"/><rect x="13.8" y="8.2" width="2.6" height="10.2" fill="#a6a6a6" stroke="#777" stroke-width="0.6"/><rect x="17.2" y="10" width="3" height="8.4" fill="#2b88d8"/></svg>
<svg style="position:absolute;left:1464px;top:35px" width="32" height="33" viewBox="0 0 32 33"><path d="M2 4 H18 M2 4 V30 H21.8 V20" fill="#ececec" stroke="#cfcfcf" stroke-width="1.4"/><rect x="2" y="4" width="19.8" height="26" fill="#ececec" stroke="#d0d0d0" stroke-width="1.3"/><path d="M5 20 L14.6 10.4 L19.4 15.2 L9.8 24.8 Z" fill="#e6e6e6" stroke="#c8c8c8" stroke-width="1.4"/><path d="M8.6 20.6 L15 14.2" stroke="#c8c8c8" stroke-width="1.4"/><path d="M16.6 8.2 L22.4 2.4 L29.6 9.6 L23.8 15.4 Z" fill="#e6e6e6" stroke="#c8c8c8" stroke-width="1.4"/><path d="M22 6.2 L25.6 9.8" stroke="#c8c8c8" stroke-width="1.4"/></svg>
<svg style="position:absolute;left:1473.20px;top:91.50px" width="8" height="5.4"><path d="M1 1 L4.0 4.4 L7 1" fill="none" stroke="#c0c0c0" stroke-width="1.35"/></svg>
<svg style="position:absolute;left:1372px;top:6px" width="16" height="16" viewBox="0 0 16 16"><path d="M6 4.6 H2.2 V13.8 H13.6 V10.6" fill="none" stroke="#217346" stroke-width="1.2"/><path d="M5.6 11 C5.8 7 8.4 5.6 12.6 5.6 M10 2.6 L13 5.6 L10 8.6" fill="none" stroke="#217346" stroke-width="1.2"/></svg>
<svg style="position:absolute;left:1450px;top:7px" width="16" height="15" viewBox="0 0 16 15"><path d="M1.6 1.6 H13.8 V9.6 H7 L3.6 12.8 V9.6 H1.6 Z" fill="none" stroke="#217346" stroke-width="1.2" stroke-linejoin="round"/></svg>
<svg style="position:absolute;left:90px;top:147px" width="8" height="5" viewBox="0 0 8 5"><path d="M0.5 0.5 H7.5 L4 4.2 Z" fill="#777"/></svg>
<div style="position:absolute;left:118px;top:145px;width:2px;height:2px;background:#9a9a9a"></div>
<div style="position:absolute;left:118px;top:149px;width:2px;height:2px;background:#9a9a9a"></div>
<div style="position:absolute;left:118px;top:153px;width:2px;height:2px;background:#9a9a9a"></div>
<svg style="position:absolute;left:146px;top:144px" width="13" height="13" viewBox="0 0 13 13"><path d="M1.2 1.2 L11.6 11.6 M11.6 1.2 L1.2 11.6" stroke="#bdbdbd" stroke-width="1.5"/></svg>
<svg style="position:absolute;left:182px;top:144px" width="15" height="13" viewBox="0 0 15 13"><path d="M1.4 6.8 L5.6 11.2 L13.8 1.4" fill="none" stroke="#c2c2c2" stroke-width="1.8"/></svg>
<div class="t" style="left:219.00px;top:141.28px;font-size:15.5px;color:#555;font-family:'Liberation Serif',serif;font-style:italic;">f</div>
<div class="t" style="left:224.20px;top:144.67px;font-size:11.5px;color:#555;font-family:'Liberation Serif',serif;font-style:italic;">x</div>
</body></html>
